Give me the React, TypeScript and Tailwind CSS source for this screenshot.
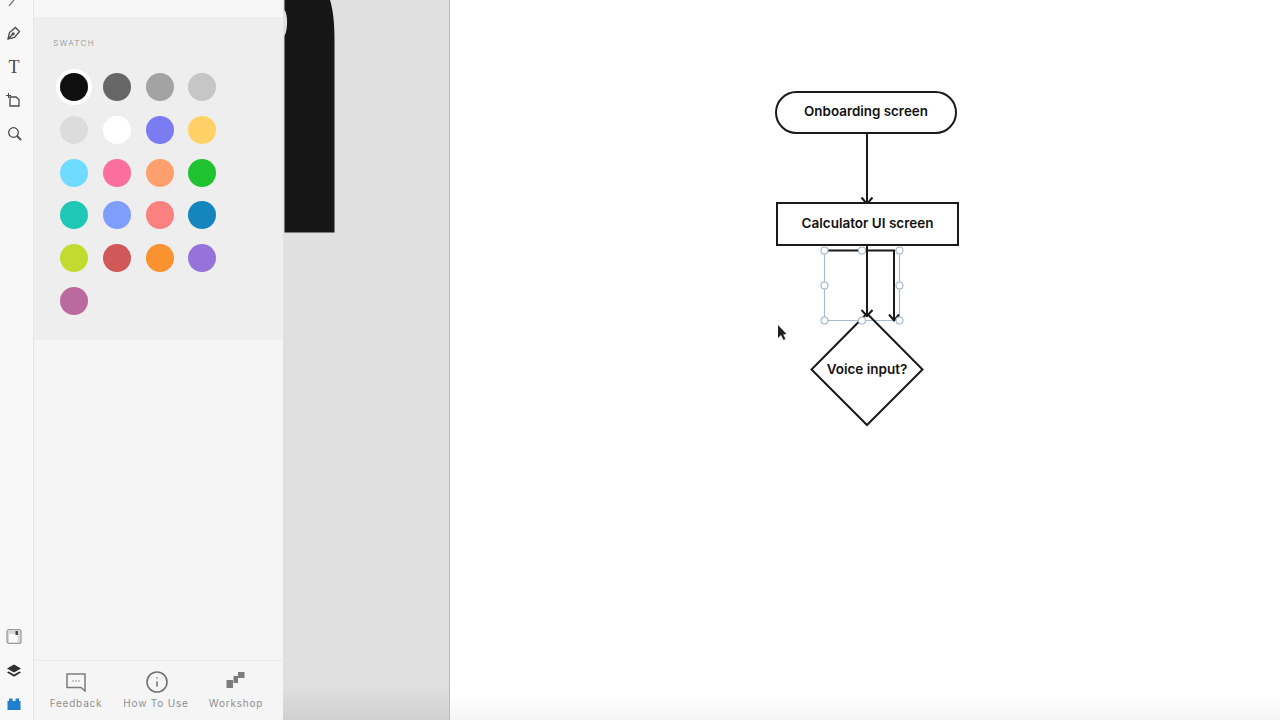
import { Info } from 'lucide-react';

const swatches = [
  '#0f0f0f', '#666666', '#a3a3a3', '#c6c6c6',
  '#dcdcdc', '#ffffff', '#7b7bf2', '#ffd166',
  '#6fdcff', '#fb6f9f', '#ffa06e', '#1fc22f',
  '#1fc8b4', '#7f9dfb', '#fb8080', '#1485bd',
  '#c1dc2e', '#d05858', '#fb9230', '#9673d8',
  '#bb6aa0',
];

function ToolIcon({ children, className }: { children: React.ReactNode; className?: string }) {
  return (
    <svg width="18" height="18" viewBox="0 0 18 18" fill="none" stroke="#4a4a4a" strokeWidth="1.3" className={className}>
      {children}
    </svg>
  );
}

function Toolbar() {
  return (
    <div className="w-[34px] h-full shrink-0 bg-[#f8f8f8] border-r border-[#e6e6e6] flex flex-col items-center pr-[5px]">
      <div className="h-[6px] w-full overflow-hidden flex justify-center">
        <svg width="14" height="6" viewBox="0 0 14 6" fill="none" stroke="#777" strokeWidth="1.3"><path d="M2 6 L7 0" /></svg>
      </div>
      <div className="mt-[18px] flex flex-col items-center gap-[15.5px]">
        <ToolIcon>
          <path d="M3 15 L4.5 8.5 L10.5 3.5 L14.5 7.5 L9.5 13.5 Z" />
          <path d="M3 15 L7.5 10.5" />
          <circle cx="8.2" cy="9.8" r="1" />
        </ToolIcon>
        <div className="h-[18px] flex items-center text-[#4a4a4a] text-[18px] leading-none [font-family:'Liberation_Serif',serif]">T</div>
        <ToolIcon>
          <path d="M5 6 H11 L14 8.5 V15 H5 Z" />
          <path d="M3.5 2 V7 M1 4.5 H6" strokeWidth="1" />
        </ToolIcon>
        <ToolIcon className="ml-[2px]">
          <circle cx="7.5" cy="7.5" r="4.8" />
          <path d="M11 11 L15 15" strokeWidth="1.8" />
        </ToolIcon>
      </div>
      <div className="mt-auto mb-[9px] flex flex-col items-center gap-[18px]">
        <svg width="16" height="17" viewBox="0 0 16 17">
          <rect x="1" y="1.5" width="14" height="14" rx="2" fill="#d8d8d8" stroke="#9a9a9a" strokeWidth="1.2" />
          <rect x="3" y="6" width="8.5" height="8" fill="#fafafa" />
          <rect x="9.5" y="3" width="2.5" height="4" fill="#444" />
        </svg>
        <svg width="16" height="16" viewBox="0 0 16 16" fill="#2f2f2f">
          <path d="M8 1.5 L15 5.5 L8 9.5 L1 5.5 Z" />
          <path d="M2.7 8.4 L8 11.4 L13.3 8.4 L15 9.6 L8 13.8 L1 9.6 Z" />
        </svg>
        <svg width="14" height="14" viewBox="0 0 14 14" fill="#1e7fd0">
          <path d="M0.5 4 H2 V1.5 H5.5 V4 H8.5 V1.5 H12 V4 H13.5 V13 H0.5 Z" />
        </svg>
      </div>
    </div>
  );
}

function FooterLink({ icon, label }: { icon: React.ReactNode; label: string }) {
  return (
    <div className="w-[80px] flex flex-col items-center">
      <div className="h-[26px] flex items-center justify-center">{icon}</div>
      <span className="mt-[2px] text-[10px] leading-[12px] tracking-[0.8px] text-[#8f8f8f] [font-family:'Inter',sans-serif]">{label}</span>
    </div>
  );
}

function SidePanel() {
  return (
    <div className="w-[249px] h-full shrink-0 bg-[#f5f5f5] flex flex-col">
      <div className="h-[17px] bg-[#f6f6f6]" />
      <div className="h-[323px] bg-[#eeeeee] pl-[19px] pt-[21px]">
        <div className="text-[8px] leading-[10px] tracking-[1.3px] text-[#a5a5a5] [font-family:'Inter',sans-serif]">SWATCH</div>
        <div className="mt-[25px] ml-[7px] grid grid-cols-[repeat(4,28px)] auto-rows-[28px] gap-x-[14.8px] gap-y-[14.8px]">
          {swatches.map((c, i) => (
            <div
              key={i}
              className={i === 0 ? 'rounded-full shadow-[0_0_0_4px_#ffffff]' : 'rounded-full'}
              style={{ backgroundColor: c }}
            />
          ))}
        </div>
      </div>
      <div className="flex-1" />
      <div className="h-[60px] border-t border-[#ebebeb] pl-[2px] pt-[8px] flex">
        <FooterLink
          label="Feedback"
          icon={
            <svg width="20" height="20" viewBox="0 0 20 20" fill="none" stroke="#7c7c7c" strokeWidth="1.5">
              <path d="M1 2 H19 V19 L15 15.5 H1 Z" />
              <path d="M6.5 9 H7.5 M9.5 9 H10.5 M12.5 9 H13.5" strokeWidth="1.3" />
            </svg>
          }
        />
        <FooterLink label="How To Use" icon={<Info size={24} strokeWidth={1.6} color="#737373" className="ml-[2px]" />} />
        <FooterLink
          label="Workshop"
          icon={
            <svg width="20" height="20" viewBox="0 0 20 20" fill="#7c7c7c" className="mr-[2px] mb-[4px]">
              <rect x="1.5" y="10" width="6.5" height="8" />
              <rect x="8.5" y="6" width="4.5" height="7" />
              <rect x="13" y="2" width="6.5" height="6" />
            </svg>
          }
        />
      </div>
    </div>
  );
}

function Flowchart() {
  return (
    <div className="absolute left-[450px] top-0 w-[830px] h-[720px]">
      <svg width="830" height="720" viewBox="450 0 830 720" fill="none" className="absolute inset-0">
        <path d="M867 134 V204 M861.5 197.5 L867 204 L872.5 197.5" stroke="#1a1a1a" strokeWidth="2" />
        <path d="M824.5 250.5 H899.5 V320.5 H824.5 Z" stroke="#a9bccd" strokeWidth="1.2" />
        <path d="M828 250.5 H894 V320" stroke="#1a1a1a" strokeWidth="2" />
        <path d="M889 314.5 L894 320.5 L899 314.5" stroke="#1a1a1a" strokeWidth="2" />
        <path d="M867 245 V317 M861.5 310 L867 316 L872.5 310" stroke="#1a1a1a" strokeWidth="2" />
        <path d="M867 313.5 L922.5 369.5 L867 425 L811.5 369.5 Z" fill="none" stroke="#1a1a1a" strokeWidth="2" />
        {[[824.5, 250.5], [862, 250.5], [899.5, 250.5], [824.5, 285.5], [899.5, 285.5], [824.5, 320.5], [862, 320.5], [899.5, 320.5]].map(([x, y], i) => (
          <circle key={i} cx={x} cy={y} r="3.5" fill="#fff" stroke="#9fb4c8" strokeWidth="1.1" />
        ))}
        <path d="M778 325 V338 L781 335 L783.5 340 L785.5 339 L783.2 334.5 L786.5 334 Z" fill="#222" />
      </svg>
      <div className="absolute left-[325px] top-[91px] w-[182px] h-[43px] pb-[2px] rounded-full border-2 border-[#1a1a1a] bg-white flex items-center justify-center text-[13.4px] font-semibold text-[#111] [font-family:'Inter',sans-serif]">
        Onboarding screen
      </div>
      <div className="absolute left-[326px] top-[202px] w-[183px] h-[44px] pb-[2px] border-2 border-[#1a1a1a] bg-white flex items-center justify-center text-[13.5px] font-semibold text-[#111] [font-family:'Inter',sans-serif]">
        Calculator UI screen
      </div>
      <div className="absolute left-[361px] top-[359px] w-[112px] h-[20px] flex items-center justify-center text-[13.5px] font-semibold text-[#111] [font-family:'Inter',sans-serif]">
        Voice input?
      </div>
    </div>
  );
}

export default function App() {
  return (
    <div className="relative w-[1280px] h-[720px] overflow-hidden bg-white flex">
      <Toolbar />
      <SidePanel />
      <div className="w-[167px] h-full shrink-0 bg-[linear-gradient(to_bottom,#e0e0e0_95%,#d0d0d0_100%)] border-r border-[#bdbdbd]">
        <svg width="51" height="233" viewBox="0 0 51 233" className="ml-[1px]">
          <path d="M0.5 0 H46 C49 10 50.5 22 50.5 40 V232.5 H0.5 V36 C4 30 4 14 0.5 10 Z" fill="#161616" />
        </svg>
      </div>
      <div className="flex-1 bg-white" />
      <Flowchart />
      <div className="absolute left-[450px] bottom-0 w-[830px] h-[24px] bg-gradient-to-b from-white to-[#f4f4f4]" />
    </div>
  );
}
